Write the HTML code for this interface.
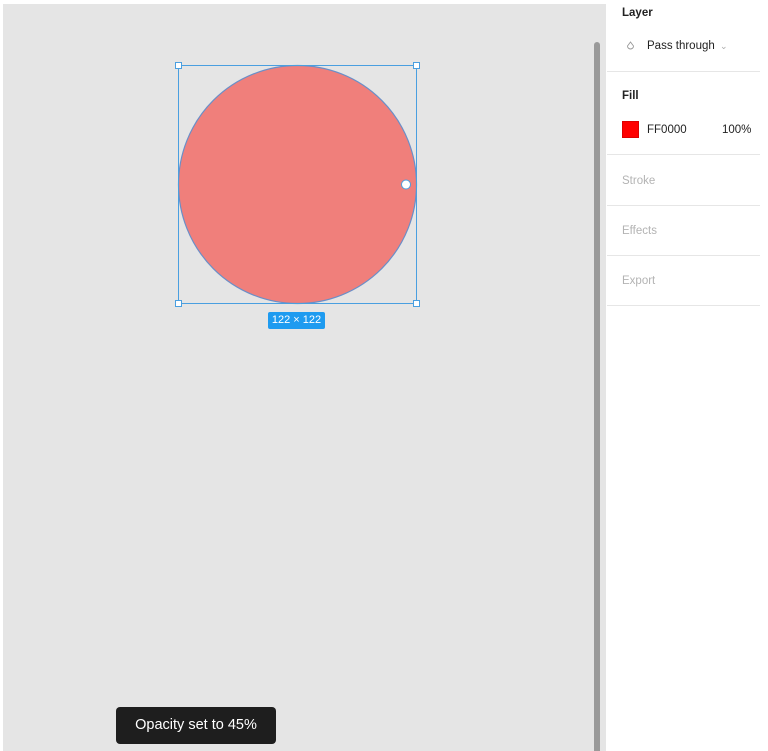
<!DOCTYPE html>
<html><head><meta charset="utf-8"><style>
*{margin:0;padding:0;box-sizing:border-box}
body{width:768px;height:751px;background:#fff;position:relative;overflow:hidden;font-family:"Liberation Sans",sans-serif}
.canvas{position:absolute;left:3px;top:4px;width:603px;height:747px;background:#e5e5e5}
.sb{position:absolute;left:594px;top:42px;width:6px;height:709px;background:#9a9a9a;border-radius:3px 3px 0 0}
.panel{position:absolute;left:607px;top:0;width:161px;height:751px;background:#fff}
.t{position:absolute;font-size:11.5px;color:#222}
.g{color:#b3b3b3}
.hr{position:absolute;left:607px;width:153px;height:1px;background:#e6e6e6}
.h{position:absolute;width:7px;height:7px;background:#fff;border:1px solid #4a9fe0}
.toast{position:absolute;left:116px;top:707px;width:160px;height:37px;background:#1e1e1e;border-radius:4px;color:#fff;font-size:14.5px;line-height:37px;text-align:center}
</style></head><body>
<div class="canvas"></div>
<div class="sb"></div>
<svg style="position:absolute;left:0;top:0" width="600" height="400">
<circle cx="297.5" cy="184.5" r="119" fill="#f07f7b" stroke="#6a8fc8" stroke-width="1.2"/>
<rect x="178.5" y="65.5" width="238" height="238" fill="none" stroke="#4a9fe0" stroke-width="1"/>
<circle cx="406" cy="184.5" r="4.5" fill="#fff" stroke="#4a9fe0" stroke-width="1"/>
</svg>
<div class="h" style="left:175px;top:62px"></div>
<div class="h" style="left:413px;top:62px"></div>
<div class="h" style="left:175px;top:300px"></div>
<div class="h" style="left:413px;top:300px"></div>
<div style="position:absolute;left:268px;top:312px;width:57px;height:17px;background:#1e9bf0;border-radius:2px;color:#fff;font-size:11px;line-height:17px;text-align:center">122 × 122</div>
<div class="toast">Opacity set to 45%</div>
<div class="panel"></div>
<div class="t" style="left:622px;top:7px;font-weight:bold">Layer</div>
<svg style="position:absolute;left:626px;top:41px" width="9" height="10"><path d="M4.5 1 L7.5 5 A3 3 0 1 1 1.5 5 Z" fill="none" stroke="#999" stroke-width="0.9"/></svg>
<div class="t" style="left:647px;top:40px">Pass through <span style="color:#aaa;font-size:9px;position:relative;left:2px">⌄</span></div>
<div class="hr" style="top:71px"></div>
<div class="t" style="left:622px;top:90px;font-weight:bold">Fill</div>
<div style="position:absolute;left:622px;top:121px;width:17px;height:17px;background:#f00;border:1px solid #d00"></div>
<div class="t" style="left:647px;top:124px">FF0000</div>
<div class="t" style="left:722px;top:124px">100%</div>
<div class="hr" style="top:154px"></div>
<div class="t g" style="left:622px;top:175px">Stroke</div>
<div class="hr" style="top:205px"></div>
<div class="t g" style="left:622px;top:225px">Effects</div>
<div class="hr" style="top:255px"></div>
<div class="t g" style="left:622px;top:275px">Export</div>
<div class="hr" style="top:305px"></div>
</body></html>
